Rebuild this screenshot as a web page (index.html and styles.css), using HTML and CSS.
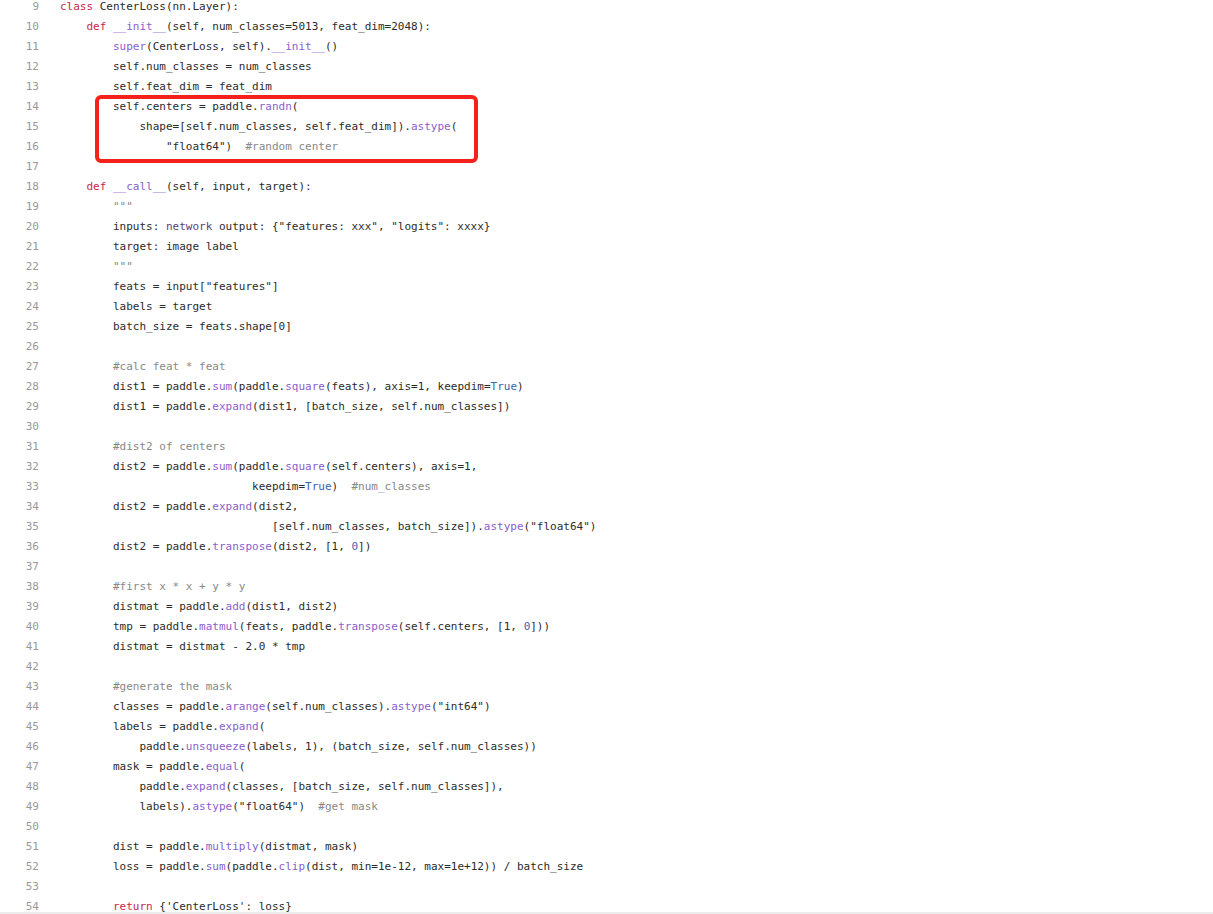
FILE: index.html
```html
<!DOCTYPE html>
<html lang="zh-CN">
<head>
    <meta charset="UTF-8">
    <title>CenterLoss</title>
    <link rel="stylesheet" href="styles.css">
</head>
<body>
    <!-- Code viewer -->
    <div class="viewer">
        <div class="code">
            <div class="line"><span class="ln">9</span><span class="src"><span class="kw">class</span> CenterLoss(nn.Layer):</span></div>
            <div class="line"><span class="ln">10</span><span class="src">    <span class="kw">def</span> <span class="fn">__init__</span>(self, num_classes=5013, feat_dim=2048):</span></div>
            <div class="line"><span class="ln">11</span><span class="src">        <span class="fn">super</span>(CenterLoss, self).<span class="fn">__init__</span>()</span></div>
            <div class="line"><span class="ln">12</span><span class="src">        self.num_classes = num_classes</span></div>
            <div class="line"><span class="ln">13</span><span class="src">        self.feat_dim = feat_dim</span></div>
            <div class="mark">
                <div class="line"><span class="ln">14</span><span class="src">        self.centers = paddle.<span class="fn">randn</span>(</span></div>
                <div class="line"><span class="ln">15</span><span class="src">            shape=[self.num_classes, self.feat_dim]).<span class="fn">astype</span>(</span></div>
                <div class="line"><span class="ln">16</span><span class="src">                "float64")  <span class="cm">#random center</span></span></div>
            </div>
            <div class="line"><span class="ln">17</span><span class="src"></span></div>
            <div class="line"><span class="ln">18</span><span class="src">    <span class="kw">def</span> <span class="fn">__call__</span>(self, input, target):</span></div>
            <div class="line"><span class="ln">19</span><span class="src">        <span class="cm">"""</span></span></div>
            <div class="line"><span class="ln">20</span><span class="src">        inputs: <span class="nw">network</span> output: {"features: xxx", "logits": xxxx}</span></div>
            <div class="line"><span class="ln">21</span><span class="src">        target: image label</span></div>
            <div class="line"><span class="ln">22</span><span class="src">        <span class="cm">"""</span></span></div>
            <div class="line"><span class="ln">23</span><span class="src">        feats = input["features"]</span></div>
            <div class="line"><span class="ln">24</span><span class="src">        labels = target</span></div>
            <div class="line"><span class="ln">25</span><span class="src">        batch_size = feats.shape[0]</span></div>
            <div class="line"><span class="ln">26</span><span class="src"></span></div>
            <div class="line"><span class="ln">27</span><span class="src">        <span class="cm">#calc feat * feat</span></span></div>
            <div class="line"><span class="ln">28</span><span class="src">        dist1 = paddle.<span class="fn">sum</span>(paddle.<span class="fn">square</span>(feats), axis=1, keepdim=<span class="lit">True</span>)</span></div>
            <div class="line"><span class="ln">29</span><span class="src">        dist1 = paddle.<span class="fn">expand</span>(dist1, [batch_size, self.num_classes])</span></div>
            <div class="line"><span class="ln">30</span><span class="src"></span></div>
            <div class="line"><span class="ln">31</span><span class="src">        <span class="cm">#dist2 of centers</span></span></div>
            <div class="line"><span class="ln">32</span><span class="src">        dist2 = paddle.<span class="fn">sum</span>(paddle.<span class="fn">square</span>(self.centers), axis=1,</span></div>
            <div class="line"><span class="ln">33</span><span class="src">                             keepdim=<span class="lit">True</span>)  <span class="cm">#num_classes</span></span></div>
            <div class="line"><span class="ln">34</span><span class="src">        dist2 = paddle.<span class="fn">expand</span>(dist2,</span></div>
            <div class="line"><span class="ln">35</span><span class="src">                                [self.num_classes, batch_size]).<span class="fn">astype</span>("float64")</span></div>
            <div class="line"><span class="ln">36</span><span class="src">        dist2 = paddle.<span class="fn">transpose</span>(dist2, [1, <span class="lit">0</span>])</span></div>
            <div class="line"><span class="ln">37</span><span class="src"></span></div>
            <div class="line"><span class="ln">38</span><span class="src">        <span class="cm">#first x * x + y * y</span></span></div>
            <div class="line"><span class="ln">39</span><span class="src">        distmat = paddle.<span class="fn">add</span>(dist1, dist2)</span></div>
            <div class="line"><span class="ln">40</span><span class="src">        tmp = paddle.<span class="fn">matmul</span>(feats, paddle.<span class="fn">transpose</span>(self.centers, [1, <span class="lit">0</span>]))</span></div>
            <div class="line"><span class="ln">41</span><span class="src">        distmat = distmat - 2.0 * tmp</span></div>
            <div class="line"><span class="ln">42</span><span class="src"></span></div>
            <div class="line"><span class="ln">43</span><span class="src">        <span class="cm">#generate the mask</span></span></div>
            <div class="line"><span class="ln">44</span><span class="src">        classes = paddle.<span class="fn">arange</span>(self.num_classes).<span class="fn">astype</span>("int64")</span></div>
            <div class="line"><span class="ln">45</span><span class="src">        labels = paddle.<span class="fn">expand</span>(</span></div>
            <div class="line"><span class="ln">46</span><span class="src">            paddle.<span class="fn">unsqueeze</span>(labels, 1), (batch_size, self.num_classes))</span></div>
            <div class="line"><span class="ln">47</span><span class="src">        mask = paddle.<span class="fn">equal</span>(</span></div>
            <div class="line"><span class="ln">48</span><span class="src">            paddle.<span class="fn">expand</span>(classes, [batch_size, self.num_classes]),</span></div>
            <div class="line"><span class="ln">49</span><span class="src">            labels).<span class="fn">astype</span>("float64")  <span class="cm">#get mask</span></span></div>
            <div class="line"><span class="ln">50</span><span class="src"></span></div>
            <div class="line"><span class="ln">51</span><span class="src">        dist = paddle.<span class="fn">multiply</span>(distmat, mask)</span></div>
            <div class="line"><span class="ln">52</span><span class="src">        loss = paddle.<span class="fn">sum</span>(paddle.<span class="fn">clip</span>(dist, min=1e-12, max=1e+12)) / batch_size</span></div>
            <div class="line"><span class="ln">53</span><span class="src"></span></div>
            <div class="line"><span class="ln">54</span><span class="src">        <span class="kw">return</span> {'CenterLoss': loss}</span></div>
        </div>
    </div>
</body>
</html>
```

FILE: styles.css
```css
/* Page */
body {
    margin: 0;
    background: #fff;
}

.viewer {
    height: 914px;
    overflow: hidden;
    box-sizing: border-box;
    border-bottom: 2px solid #ececec;
}

/* Code block */
.code {
    margin-top: -3px;
    font-family: "DejaVu Sans Mono", "Liberation Mono", monospace;
    font-size: 11px;
    color: #2b2b2b;
}

.line {
    display: flex;
    height: 20px;
    line-height: 20px;
}

.ln {
    width: 39px;
    flex-shrink: 0;
    text-align: right;
    color: #999;
}

.src {
    padding-left: 21px;
    white-space: pre;
}

/* Highlight colours */
.kw {
    color: #c7254e;
}

.fn {
    color: #8a5ecb;
}

.cm {
    color: #888;
}

.lit {
    color: #3a64b0;
}

.nw {
    color: #5b3f7a;
}

/* Red annotation box */
.mark {
    position: relative;
}

.mark::after {
    content: "";
    position: absolute;
    left: 95px;
    top: -2px;
    width: 383px;
    height: 68px;
    box-sizing: border-box;
    border: 4px solid #f5211b;
    border-radius: 6px;
}
```
